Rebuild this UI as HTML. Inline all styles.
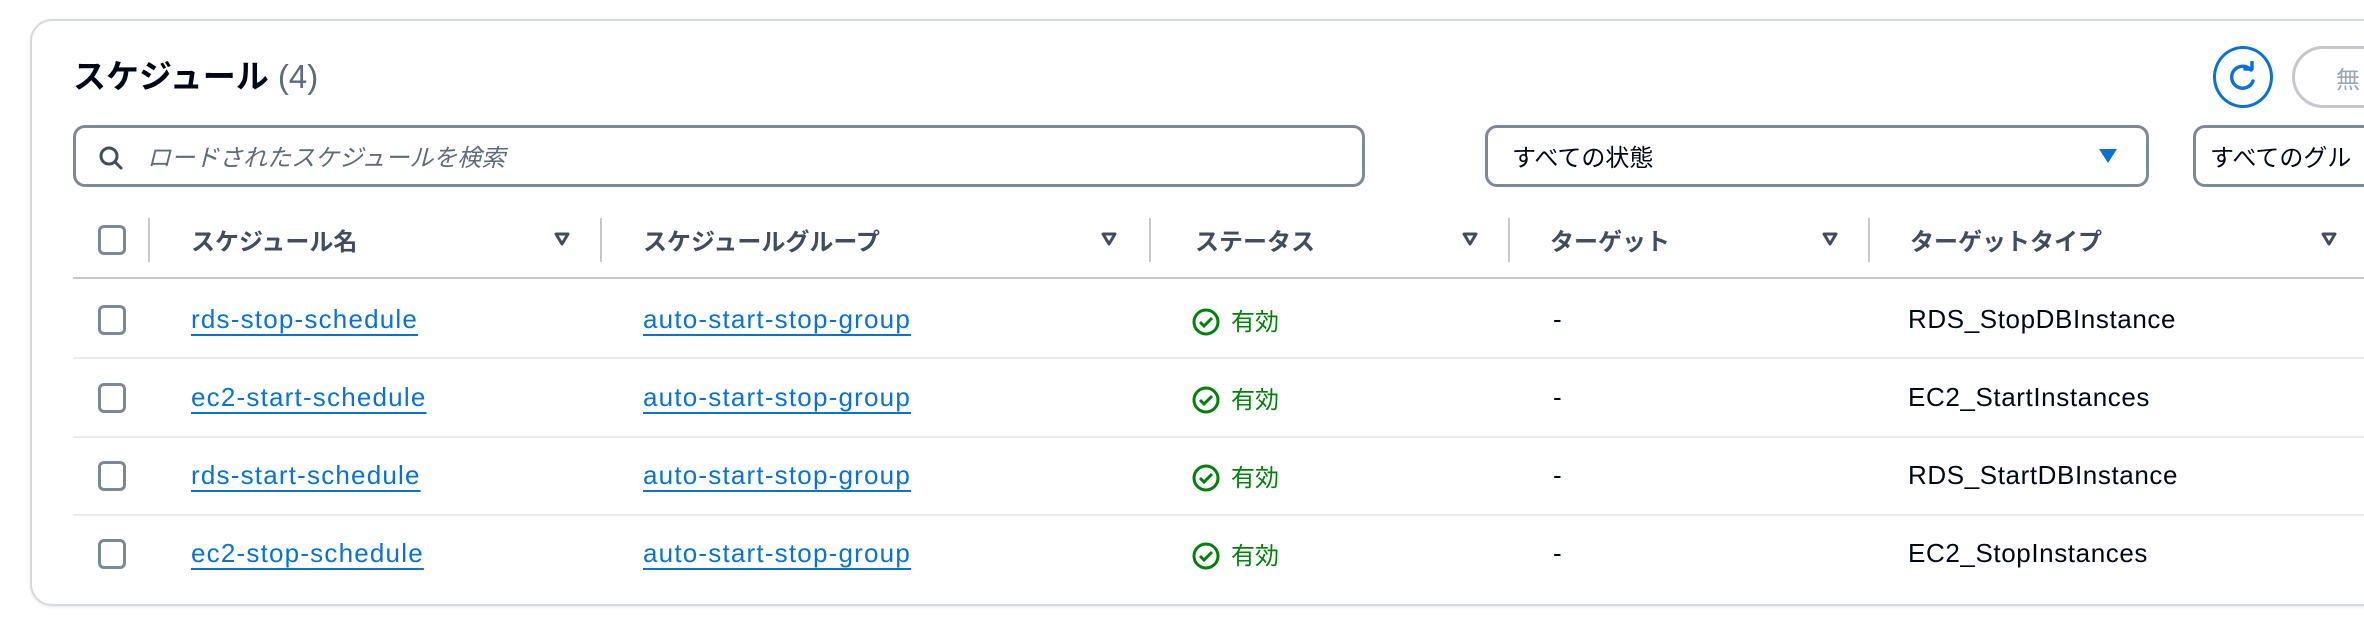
<!DOCTYPE html>
<html><head><meta charset="utf-8"><style>
*{margin:0;padding:0;box-sizing:border-box}
body{width:2364px;height:620px;background:#fff;position:relative;overflow:hidden;font-family:"Liberation Sans","Noto Sans CJK JP",sans-serif;color:#000716}
.a{position:absolute;white-space:nowrap}
.card{left:30px;top:19px;width:2400px;height:587px;border:2px solid #d5d9dd;border-radius:22px;box-shadow:0 1px 3px rgba(0,7,22,.1)}
.box{border:3px solid #7d8998;border-radius:12px;height:62px}
.cb{width:28px;height:30px;border:3px solid #7d8998;border-radius:6px}
.hd{font-size:24px;font-weight:bold;color:#414d5c;top:222px}
.tri{top:232px}
.dv{width:2px;height:44px;background:#c6c6cd;top:218px}
.ln{height:2px;background:#e9ebed;left:73px;width:2300px}
.lk{font-size:26px;letter-spacing:1.2px;color:#0972d3;text-decoration:underline;text-underline-offset:6px;text-decoration-thickness:2px}
.st{font-size:24px;color:#037f0c}
.tx{font-size:26px;letter-spacing:0.6px}
</style></head><body>
<div class="a card"></div>
<div class="a" style="left:73px;top:50px;font-size:33px;font-weight:bold">スケジュール <span style="font-weight:normal;color:#5f6b7a">(4)</span></div>
<div class="a box" style="left:73px;top:125px;width:1292px"></div>
<svg class="a" style="left:97px;top:144px" width="28" height="28" viewBox="0 0 28 28"><circle cx="12" cy="12" r="8" fill="none" stroke="#414d5c" stroke-width="3"/><path d="M18 18l6 6" stroke="#414d5c" stroke-width="3" stroke-linecap="round"/></svg>
<div class="a" style="left:147px;top:138px;font-size:24px;font-style:italic;color:#5f6b7a">ロードされたスケジュールを検索</div>
<div class="a box" style="left:1485px;top:125px;width:664px"></div>
<div class="a" style="left:1512px;top:138px;font-size:24px">すべての状態</div>
<svg class="a" style="left:2099px;top:149px" width="18" height="14"><path d="M0 0h18L9 14z" fill="#0972d3"/></svg>
<div class="a box" style="left:2193px;top:125px;width:300px"></div>
<div class="a" style="left:2210px;top:138px;font-size:24px">すべてのグル</div>
<div class="a" style="left:2213px;top:46px;width:60px;height:62px;border:3px solid #0972d3;border-radius:50%"></div>
<svg class="a" style="left:2227px;top:61px" width="32" height="32" viewBox="0 0 32 32"><path d="M24 9A11 11 0 1 0 26 20" fill="none" stroke="#0972d3" stroke-width="3.5" stroke-linecap="round"/><path d="M18 8h7V1" fill="none" stroke="#0972d3" stroke-width="3.5" stroke-linecap="round" stroke-linejoin="round"/></svg>
<div class="a" style="left:2292px;top:46px;width:120px;height:62px;border:3px solid #c6c6cd;border-radius:31px"></div>
<div class="a" style="left:2336px;top:60px;font-size:24px;color:#9ba7b6">無</div>
<div class="a cb" style="left:98px;top:225px"></div>
<div class="a dv" style="left:148px"></div>
<div class="a hd" style="left:191px">スケジュール名</div><svg class="a tri" style="left:554px" width="16" height="14"><path d="M2 2h12L8 12z" fill="none" stroke="#414d5c" stroke-width="3" stroke-linejoin="round"/></svg><div class="a dv" style="left:600px"></div>
<div class="a hd" style="left:643px">スケジュールグループ</div><svg class="a tri" style="left:1101px" width="16" height="14"><path d="M2 2h12L8 12z" fill="none" stroke="#414d5c" stroke-width="3" stroke-linejoin="round"/></svg><div class="a dv" style="left:1149px"></div>
<div class="a hd" style="left:1195px">ステータス</div><svg class="a tri" style="left:1462px" width="16" height="14"><path d="M2 2h12L8 12z" fill="none" stroke="#414d5c" stroke-width="3" stroke-linejoin="round"/></svg><div class="a dv" style="left:1508px"></div>
<div class="a hd" style="left:1550px">ターゲット</div><svg class="a tri" style="left:1822px" width="16" height="14"><path d="M2 2h12L8 12z" fill="none" stroke="#414d5c" stroke-width="3" stroke-linejoin="round"/></svg><div class="a dv" style="left:1868px"></div>
<div class="a hd" style="left:1910px">ターゲットタイプ</div><svg class="a tri" style="left:2321px" width="16" height="14"><path d="M2 2h12L8 12z" fill="none" stroke="#414d5c" stroke-width="3" stroke-linejoin="round"/></svg>
<div class="a ln" style="top:277px;background:#c6c6cd"></div>
<div class="a ln" style="top:357px"></div>
<div class="a ln" style="top:436px"></div>
<div class="a ln" style="top:514px"></div>

<div class="a cb" style="left:98px;top:305px"></div>
<div class="a lk" style="left:191px;top:304px">rds-stop-schedule</div>
<div class="a lk" style="left:643px;top:304px">auto-start-stop-group</div>
<svg class="a" style="left:1191px;top:307px" width="30" height="30" viewBox="0 0 30 30"><circle cx="15" cy="15" r="12" fill="none" stroke="#037f0c" stroke-width="3"/><path d="M9 15l4 4 8-8" fill="none" stroke="#037f0c" stroke-width="3"/></svg>
<div class="a st" style="left:1231px;top:302px">有効</div>
<div class="a tx" style="left:1553px;top:304px">-</div>
<div class="a tx" style="left:1908px;top:304px">RDS_StopDBInstance</div>

<div class="a cb" style="left:98px;top:383px"></div>
<div class="a lk" style="left:191px;top:382px">ec2-start-schedule</div>
<div class="a lk" style="left:643px;top:382px">auto-start-stop-group</div>
<svg class="a" style="left:1191px;top:385px" width="30" height="30" viewBox="0 0 30 30"><circle cx="15" cy="15" r="12" fill="none" stroke="#037f0c" stroke-width="3"/><path d="M9 15l4 4 8-8" fill="none" stroke="#037f0c" stroke-width="3"/></svg>
<div class="a st" style="left:1231px;top:380px">有効</div>
<div class="a tx" style="left:1553px;top:382px">-</div>
<div class="a tx" style="left:1908px;top:382px">EC2_StartInstances</div>

<div class="a cb" style="left:98px;top:461px"></div>
<div class="a lk" style="left:191px;top:460px">rds-start-schedule</div>
<div class="a lk" style="left:643px;top:460px">auto-start-stop-group</div>
<svg class="a" style="left:1191px;top:463px" width="30" height="30" viewBox="0 0 30 30"><circle cx="15" cy="15" r="12" fill="none" stroke="#037f0c" stroke-width="3"/><path d="M9 15l4 4 8-8" fill="none" stroke="#037f0c" stroke-width="3"/></svg>
<div class="a st" style="left:1231px;top:458px">有効</div>
<div class="a tx" style="left:1553px;top:460px">-</div>
<div class="a tx" style="left:1908px;top:460px">RDS_StartDBInstance</div>

<div class="a cb" style="left:98px;top:539px"></div>
<div class="a lk" style="left:191px;top:538px">ec2-stop-schedule</div>
<div class="a lk" style="left:643px;top:538px">auto-start-stop-group</div>
<svg class="a" style="left:1191px;top:541px" width="30" height="30" viewBox="0 0 30 30"><circle cx="15" cy="15" r="12" fill="none" stroke="#037f0c" stroke-width="3"/><path d="M9 15l4 4 8-8" fill="none" stroke="#037f0c" stroke-width="3"/></svg>
<div class="a st" style="left:1231px;top:536px">有効</div>
<div class="a tx" style="left:1553px;top:538px">-</div>
<div class="a tx" style="left:1908px;top:538px">EC2_StopInstances</div>
</body></html>
